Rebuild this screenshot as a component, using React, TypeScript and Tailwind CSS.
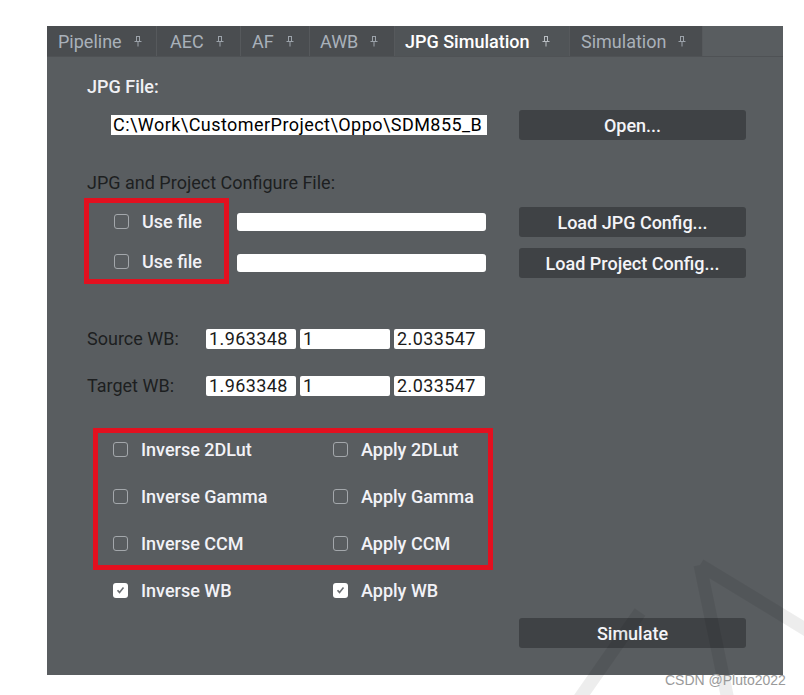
import React from "react";

const tabs = [
  { name: "Pipeline", w: "w-[110px] pl-[11px]" },
  { name: "AEC", w: "w-[84px] pl-[13px]" },
  { name: "AF", w: "w-[69px] pl-[11px]" },
  { name: "AWB", w: "w-[85px] pl-[10px]" },
  { name: "JPG Simulation", w: "w-[175px] pl-[10px]", active: true },
  { name: "Simulation", w: "w-[133px] pl-[11px]" },
];

const Pin = ({ active }: { active?: boolean }) => (
  <svg width="8" height="11" viewBox="0 0 8 11" className={active ? "text-[#b8bdc2]" : "text-[#9ca3aa]"}>
    <path d="M2 0.5h4M2.5 0.5v5M5.5 0.5v5M0.5 5.5h7M4 5.5v5" stroke="currentColor" strokeWidth="1" fill="none" />
  </svg>
);

const Check = ({ checked }: { checked?: boolean }) =>
  checked ? (
    <span className="flex h-[15px] w-[15px] items-center justify-center rounded-[3px] bg-white">
      <svg width="9" height="8" viewBox="0 0 9 8">
        <path d="M1.5 4.2l2 2.2 4-5" stroke="#6b6f73" strokeWidth="1.6" fill="none" />
      </svg>
    </span>
  ) : (
    <span className="h-[15px] w-[15px] rounded-[3px] border-[1.5px] border-[#a3a7ab]" />
  );

const CheckRow = ({ label, checked }: { label: string; checked?: boolean }) => (
  <div className="flex h-[30px] items-center gap-[13px]">
    <Check checked={checked} />
    <span className="text-[18px] font-medium text-[#f2f2f7]">{label}</span>
  </div>
);

const Btn = ({ children }: { children: React.ReactNode }) => (
  <button className="h-[30px] w-[227px] rounded-[3px] bg-[#3f4245] text-[18px] font-medium text-[#f4f4f8]">
    {children}
  </button>
);

const Field = ({ value, w }: { value: string; w: string }) => (
  <div className={`h-[20px] ${w} overflow-hidden rounded-[2px] bg-white pl-[3px] text-[18px] leading-[20px] tracking-[0.4px] text-[#1a1a1a]`}>
    {value}
  </div>
);

const WbRow = ({ label }: { label: string }) => (
  <div className="flex h-[47px] items-center">
    <span className="w-[119px] text-[18px] text-[#1d1f21]">{label}</span>
    <div className="flex gap-[4px]">
      <Field value="1.963348" w="w-[90px]" />
      <Field value="1" w="w-[90px]" />
      <Field value="2.033547" w="w-[91px]" />
    </div>
  </div>
);

export default function App() {
  return (
    <div className="relative h-[695px] w-[804px] overflow-hidden bg-white pl-[47px] pt-[26px] font-['Roboto',sans-serif]">
      <div className="h-[649px] w-[736px] bg-[#595d60]">
        {/* tab strip */}
        <div className="flex h-[31px] border-b border-[#4f5255]">
          {tabs.map((t) => (
            <div
              key={t.name}
              className={`${t.w} flex items-center gap-[12px] border-r border-[#56595c] ${
                t.active ? "bg-[#505457] font-medium text-white" : "bg-[#4a4d50] text-[#a9b1ba]"
              }`}
            >
              <span className="text-[18px]">{t.name}</span>
              <Pin active={t.active} />
            </div>
          ))}
        </div>

        <div className="pl-[37px]">
          <div className="flex h-[53px] items-center pl-[3px] pt-[6px] text-[18px] font-medium text-[#f0f0f4]">JPG File:</div>

          <div className="flex items-center">
            <div className="ml-[27px] h-[20px] w-[376px] overflow-hidden whitespace-nowrap bg-white pl-[2px] text-[18px] leading-[20px] tracking-[0.45px] text-black">
              C:\Work\CustomerProject\Oppo\SDM855_B
            </div>
            <div className="ml-[32px]">
              <Btn>Open...</Btn>
            </div>
          </div>

          <div className="flex h-[58px] items-center pl-[3px] pt-[26px] text-[18px] text-[#1d1f21]">
            JPG and Project Configure File:
          </div>

          {/* config files */}
          <div className="flex">
            <div className="flex">
              <div className="flex h-[86px] w-[145px] flex-col justify-center border-[5px] border-[#e3101f] pl-[25px]">
                <div className="flex h-[40px] shrink-0 items-center gap-[13px]">
                  <Check />
                  <span className="text-[18px] font-medium text-[#f2f2f7]">Use file</span>
                </div>
                <div className="flex h-[40px] shrink-0 items-center gap-[13px]">
                  <Check />
                  <span className="text-[18px] font-medium text-[#f2f2f7]">Use file</span>
                </div>
              </div>
              <div className="ml-[8px] flex flex-col gap-[23px] pt-[15px]">
                <div className="h-[18px] w-[249px] rounded-[3px] bg-white" />
                <div className="h-[18px] w-[249px] rounded-[3px] bg-white" />
              </div>
            </div>
            <div className="ml-[33px] flex flex-col gap-[11px] pt-[9px]">
              <Btn>Load JPG Config...</Btn>
              <Btn>Load Project Config...</Btn>
            </div>
          </div>

          <div className="pl-[3px] pt-[31px]">
            <WbRow label="Source WB:" />
            <WbRow label="Target WB:" />
          </div>

          {/* processing options */}
          <div className="ml-[9px] mt-[19px] grid h-[142px] w-[400px] grid-cols-[220px_1fr] content-start gap-y-[17px] border-[5px] border-[#e3101f] pl-[15px] pt-[1px]">
            <CheckRow label="Inverse 2DLut" />
            <CheckRow label="Apply 2DLut" />
            <CheckRow label="Inverse Gamma" />
            <CheckRow label="Apply Gamma" />
            <CheckRow label="Inverse CCM" />
            <CheckRow label="Apply CCM" />
          </div>
          <div className="ml-[29px] mt-[5px] grid w-[380px] grid-cols-[220px_1fr]">
            <CheckRow label="Inverse WB" checked />
            <CheckRow label="Apply WB" checked />
          </div>

          <div className="ml-[435px] mt-[13px]">
            <Btn>Simulate</Btn>
          </div>
        </div>
      </div>

      {/* watermark */}
      <svg className="pointer-events-none absolute left-0 top-0" width="804" height="695">
        <path d="M575 705 L640 612 M700 565 L728 700 M700 565 L810 632" stroke="black" strokeOpacity="0.07" strokeWidth="13" fill="none" />
      </svg>
      <span className="absolute left-[665px] top-[670px] font-['Liberation_Sans',sans-serif] text-[14px] text-[#9a9a9a]">
        CSDN @Pluto2022
      </span>
    </div>
  );
}
